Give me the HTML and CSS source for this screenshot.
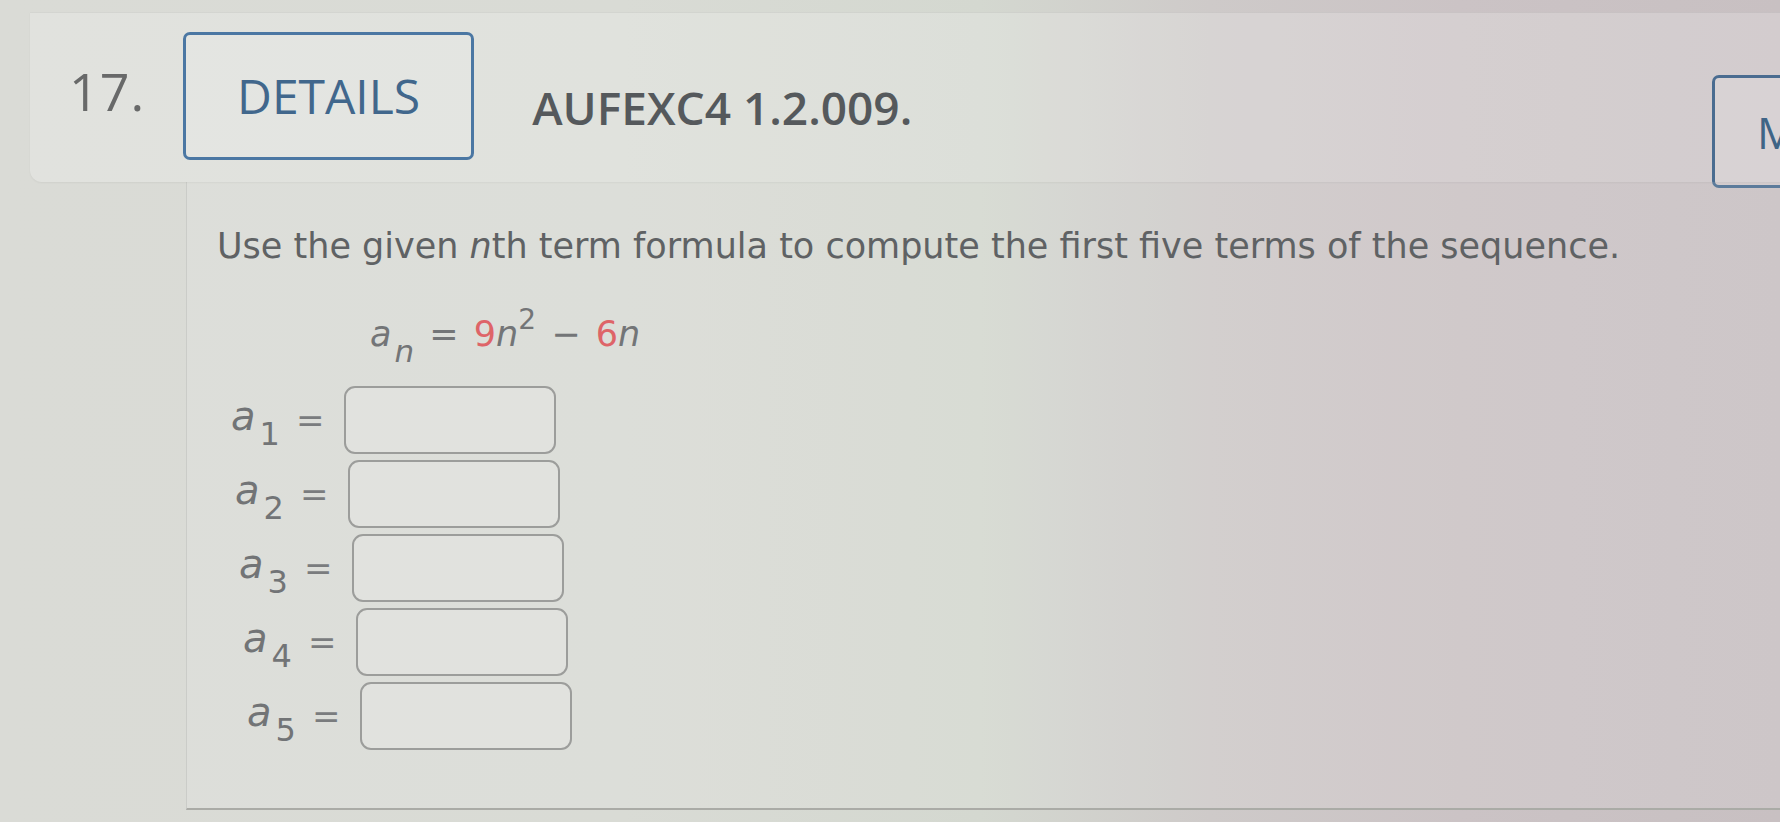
FILE: index.html
```html
<!DOCTYPE html>
<html lang="en">
<head>
<meta charset="utf-8">
<title>Question 17</title>
<link rel="stylesheet" href="styles.css">
</head>
<body>
<div class="page">
  <header class="qhead">
    <span class="qnum">17.</span>
    <button class="btn details" type="button">DETAILS</button>
    <span class="qid">AUFEXC4 1.2.009.</span>
    <button class="btn notes" type="button"><span class="notes-txt">MY NOTES</span></button>
  </header>
  <section class="qbody">
    <p class="prompt">Use the given <i>n</i>th term formula to compute the first five terms of the sequence.</p>
    <div class="formula">
      <i class="var">a</i><sub class="sub"><i>n</i></sub>
      <span class="op">=</span>
      <span class="red">9</span><i class="var">n</i><sup class="sup">2</sup>
      <span class="op">&minus;</span>
      <span class="red">6</span><i class="var">n</i>
    </div>
    <div class="answers">
      <div class="row r1"><span class="lbl"><i>a</i><sub>1</sub></span><span class="eq">=</span><input class="box" type="text"></div>
      <div class="row r2"><span class="lbl"><i>a</i><sub>2</sub></span><span class="eq">=</span><input class="box" type="text"></div>
      <div class="row r3"><span class="lbl"><i>a</i><sub>3</sub></span><span class="eq">=</span><input class="box" type="text"></div>
      <div class="row r4"><span class="lbl"><i>a</i><sub>4</sub></span><span class="eq">=</span><input class="box" type="text"></div>
      <div class="row r5"><span class="lbl"><i>a</i><sub>5</sub></span><span class="eq">=</span><input class="box" type="text"></div>
    </div>
  </section>
</div>
</body>
</html>
```

FILE: styles.css
```css
html, body {
  margin: 0;
  padding: 0;
}
body {
  width: 1780px;
  height: 822px;
  overflow: hidden;
  background: linear-gradient(90deg, #dadbd6 0%, #d9dbd5 35%, #d4d8d0 55%, #cecac9 68%, #cbc3c5 82%, #c8c0c2 100%);
  font-family: "DejaVu Sans", Verdana, sans-serif;
}
.page {
  width: 1780px;
  height: 822px;
  overflow: hidden;
  display: flex;
  flex-direction: column;
}

/* ---------- header ---------- */
.qhead {
  margin-top: 12px;
  margin-left: 30px;
  height: 170px;
  box-sizing: border-box;
  padding-left: 39px;
  display: flex;
  align-items: flex-start;
  background: rgba(255, 255, 255, 0.2);
  border-top: 1px solid rgba(0, 0, 0, 0.06);
  border-bottom-left-radius: 12px;
  box-shadow: 0 1px 2px rgba(0, 0, 0, 0.05);
  flex-shrink: 0;
}
.qnum {
  margin-top: 52px;
  font-family: "Open Sans", sans-serif;
  font-weight: 500;
  font-size: 52px;
  line-height: 52px;
  color: #686969;
  letter-spacing: 1px;
}
.btn {
  font-family: "Open Sans", sans-serif;
  font-weight: 400;
  color: #41678c;
  background: rgba(255, 255, 255, 0.12);
  border: 3px solid #4b77a3;
  border-radius: 7px;
  box-sizing: border-box;
  display: flex;
  align-items: center;
  padding: 0;
  flex-shrink: 0;
  white-space: nowrap;
}
.details {
  margin-top: 19px;
  margin-left: 38px;
  width: 291px;
  height: 128px;
  font-size: 48px;
  line-height: 48px;
  justify-content: center;
}
.qid {
  margin-top: 71px;
  margin-left: 58px;
  font-family: "Open Sans", sans-serif;
  font-weight: 600;
  font-size: 46px;
  line-height: 46px;
  color: #55595c;
}
.notes {
  margin-top: 62px;
  margin-left: auto;
  margin-right: -232px;
  width: 300px;
  height: 113px;
  justify-content: flex-start;
  text-align: left;
  padding-left: 42px;
  color: #3f6486;
  border-color: #4a6c90;
  overflow: hidden;
}
.notes-txt {
  display: block;
  font-size: 44px;
  line-height: 44px;
}

/* ---------- body panel ---------- */
.qbody {
  margin-left: 186px;
  height: 628px;
  box-sizing: border-box;
  padding: 43px 0 0 30px;
  background: rgba(255, 255, 255, 0.1);
  border-left: 1px solid rgba(0, 0, 0, 0.08);
  border-bottom: 2px solid #aaaba6;
  flex-shrink: 0;
}
.prompt {
  margin: 0;
  font-size: 35px;
  line-height: 42px;
  color: #5f6264;
  white-space: nowrap;
}
.prompt i {
  font-style: italic;
}
.formula {
  margin-top: 46px;
  margin-left: 153px;
  font-size: 35px;
  line-height: 42px;
  color: #737577;
  white-space: nowrap;
}
.formula .var {
  font-style: italic;
}
.formula .op {
  margin: 0 4px;
}
.formula .red {
  color: #de6468;
}
.formula .sub {
  font-size: 31px;
  line-height: 0;
  vertical-align: -0.52em;
  margin-left: 3px;
}
.formula .sup {
  font-size: 28px;
  line-height: 0;
  vertical-align: 0.62em;
}

/* ---------- answers ---------- */
.answers {
  margin-top: 31px;
  display: flex;
  flex-direction: column;
  gap: 6px;
}
.row {
  display: flex;
  align-items: center;
  height: 68px;
}
.r2 { padding-left: 4px; }
.r3 { padding-left: 8px; }
.r4 { padding-left: 12px; }
.r5 { padding-left: 16px; }
.lbl {
  margin-left: 14px;
  margin-bottom: 8px;
  width: 65px;
  font-size: 40px;
  line-height: 40px;
  color: #727476;
  white-space: nowrap;
}
.lbl sub {
  font-size: 32px;
  line-height: 0;
  vertical-align: -0.47em;
  margin-left: 4px;
}
.eq {
  width: 28px;
  font-size: 34px;
  line-height: 40px;
  color: #7a7c7e;
}
.box {
  margin-left: 20px;
  width: 212px;
  height: 68px;
  box-sizing: border-box;
  border: 2px solid #9c9d9b;
  border-radius: 11px;
  background: rgba(255, 255, 255, 0.14);
  outline: none;
  padding: 0 10px;
  font-size: 30px;
}
```
